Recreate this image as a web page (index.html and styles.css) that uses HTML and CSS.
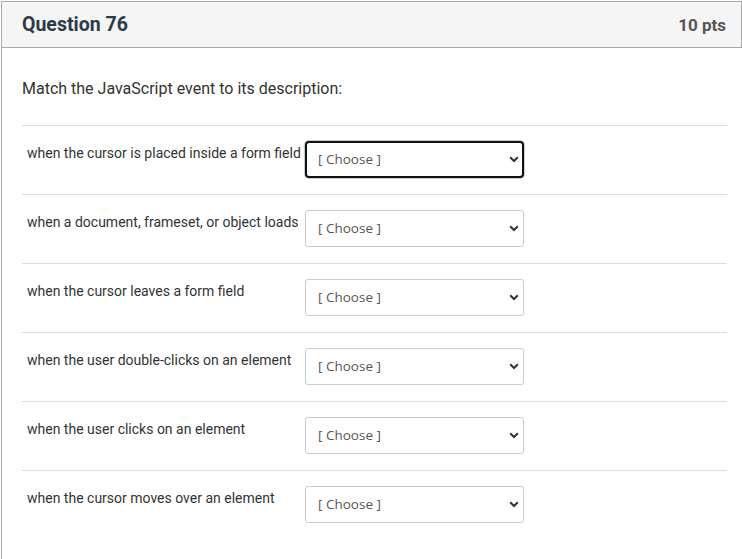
FILE: index.html
```html
<!DOCTYPE html>
<html>
<head>
<meta charset="utf-8">
<link rel="stylesheet" href="styles.css">
</head>
<body>
<div class="question">
  <div class="header">
    <div class="title">Question 76</div>
    <div class="pts">10 pts</div>
  </div>
  <div class="content">
    <p class="prompt">Match the JavaScript event to its description:</p>
    <div class="rows">
      <div class="row">
        <div class="label">when the cursor is placed inside a form field</div>
        <div class="select focused"><span>[ Choose ]</span><svg class="chev" width="10" height="7" viewBox="0 0 10 7"><path d="M1.2 1.2 L5 5 L8.8 1.2" fill="none" stroke="#333" stroke-width="2"/></svg></div>
      </div>
      <div class="row">
        <div class="label">when a document, frameset, or object loads</div>
        <div class="select"><span>[ Choose ]</span><svg class="chev" width="10" height="7" viewBox="0 0 10 7"><path d="M1.2 1.2 L5 5 L8.8 1.2" fill="none" stroke="#333" stroke-width="2"/></svg></div>
      </div>
      <div class="row">
        <div class="label">when the cursor leaves a form field</div>
        <div class="select"><span>[ Choose ]</span><svg class="chev" width="10" height="7" viewBox="0 0 10 7"><path d="M1.2 1.2 L5 5 L8.8 1.2" fill="none" stroke="#333" stroke-width="2"/></svg></div>
      </div>
      <div class="row">
        <div class="label">when the user double-clicks on an element</div>
        <div class="select"><span>[ Choose ]</span><svg class="chev" width="10" height="7" viewBox="0 0 10 7"><path d="M1.2 1.2 L5 5 L8.8 1.2" fill="none" stroke="#333" stroke-width="2"/></svg></div>
      </div>
      <div class="row">
        <div class="label">when the user clicks on an element</div>
        <div class="select"><span>[ Choose ]</span><svg class="chev" width="10" height="7" viewBox="0 0 10 7"><path d="M1.2 1.2 L5 5 L8.8 1.2" fill="none" stroke="#333" stroke-width="2"/></svg></div>
      </div>
      <div class="row">
        <div class="label">when the cursor moves over an element</div>
        <div class="select"><span>[ Choose ]</span><svg class="chev" width="10" height="7" viewBox="0 0 10 7"><path d="M1.2 1.2 L5 5 L8.8 1.2" fill="none" stroke="#333" stroke-width="2"/></svg></div>
      </div>
    </div>
  </div>
</div>
</body>
</html>
```

FILE: styles.css
```css
html, body {
  margin: 0;
  padding: 0;
  background: #fff;
}
body {
  font-family: Roboto, "Liberation Sans", sans-serif;
  color: #2d3b45;
}
.question {
  margin: 1px 0 0 1px;
  border-left: 1px solid #a9a9a9;
  min-height: 558px;
  box-sizing: border-box;
}
.header {
  display: flex;
  justify-content: space-between;
  align-items: center;
  height: 45px;
  background: #f5f5f5;
  border-top: 1px solid #a9a9a9;
  border-bottom: 1px solid #a9a9a9;
  border-right: 1px solid #a9a9a9;
  padding: 0 15px 0 20px;
}
.title {
  font-size: 19.5px;
  font-weight: 700;
  color: #2d3b45;
}
.pts {
  font-size: 17px;
  font-weight: 700;
  color: #555;
}
.content {
  padding: 0 15px 0 20px;
}
.prompt {
  margin: 0;
  padding-top: 30px;
  font-size: 16px;
  line-height: 22px;
  height: 47px;
  color: #333;
}
.row {
  display: flex;
  align-items: flex-start;
  border-top: 1px solid #dcdcdc;
  height: 68px;
}
.label {
  width: 278px;
  padding: 17px 0 0 5px;
  font-size: 14px;
  line-height: 20px;
  color: #333;
}
.select {
  margin-top: 15px;
  width: 219px;
  height: 37px;
  box-sizing: border-box;
  border: 1px solid #c7cdd1;
  border-radius: 3px;
  display: flex;
  align-items: center;
  justify-content: space-between;
  padding: 0 4px 0 12px;
  font-family: "Open Sans", "Liberation Sans", sans-serif;
  font-size: 13.5px;
  color: #555;
  background: #fff;
}
.select span {
  margin-top: -2px;
}
.select.focused {
  border: 2px solid #111;
  border-radius: 4px;
  padding: 0 3px 0 11px;
  box-shadow: 0 0 0 1px #c7cdd1;
}
.chev {
  display: block;
}
```
